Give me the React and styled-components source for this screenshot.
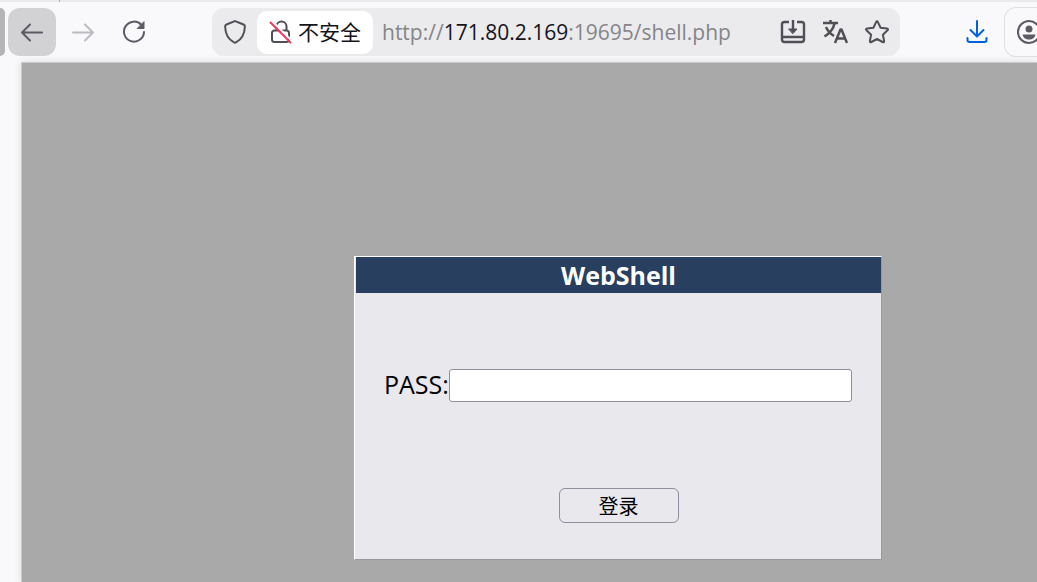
import React, { useState } from 'react';
import styled, { createGlobalStyle } from 'styled-components';

const GlobalStyle = createGlobalStyle`
  * {
    box-sizing: border-box;
  }
  body {
    margin: 0;
    background: #f9f9fb;
    font-family: 'Open Sans', 'Noto Sans CJK SC', sans-serif;
    overflow: hidden;
  }
`;

const Window = styled.div`
  display: flex;
  flex-direction: column;
  height: 100vh;
`;

const TabStrip = styled.div`
  flex: none;
  height: 2px;
  padding-left: 59px;
  background: #eaeaed;
`;

const TabEdge = styled.div`
  width: 1px;
  height: 2px;
  background: #aeaeb2;
`;

const Toolbar = styled.nav`
  flex: none;
  display: flex;
  align-items: center;
  gap: 3px;
  height: 60px;
  overflow: hidden;
`;

const SidebarEdge = styled.div`
  flex: none;
  width: 5px;
  height: 48px;
  border-radius: 0 8px 8px 0;
  background: #b5b5b7;
`;

const Button = styled.button`
  flex: none;
  padding: 0;
  border: none;
  background: none;
  font-family: inherit;
  color: inherit;
  cursor: pointer;
`;

const ToolButton = styled(Button)`
  display: grid;
  place-items: center;
  width: 48px;
  height: 48px;
  border-radius: 12px;
  color: ${(props) => props.$color || '#5b5b66'};
  background: ${(props) => (props.$active ? '#d2d2d4' : 'transparent')};
`;

const UrlBar = styled.div`
  flex: 1;
  min-width: 0;
  display: flex;
  align-items: center;
  height: 48px;
  margin: 0 50px 0 51px;
  padding: 0 2px;
  border-radius: 12px;
  background: #ebebed;
  color: #4f4f57;
`;

const UrlButton = styled(Button)`
  display: grid;
  place-items: center;
  width: 42px;
  height: 42px;
`;

const SecurityChip = styled(Button)`
  display: flex;
  align-items: center;
  gap: 4px;
  height: 43px;
  margin-left: 1px;
  padding: 0 12px 0 11px;
  border-radius: 10px;
  background: #fff;
  font-size: 21px;
  line-height: 28px;
`;

const Address = styled.div`
  flex: 1;
  min-width: 0;
  padding-left: 9px;
  overflow: hidden;
  white-space: nowrap;
  font-size: 21px;
  line-height: 30px;
  color: #858588;
`;

const Dark = styled.span`
  color: #15141a;
`;

const AccountButton = styled(Button)`
  width: 33px;
  height: 50px;
  padding-left: 11px;
  border: 1px solid #e0e0e4;
  border-right: none;
  border-radius: 12px 0 0 12px;
  overflow: hidden;
  color: #5b5b66;
`;

const Page = styled.main`
  flex: 1;
  display: grid;
  grid-template-columns: 332fr 528px 155fr;
  align-items: start;
  margin-left: 21px;
  padding-top: 193px;
  border-top: 1px solid #c9cacc;
  border-left: 1px solid #c9cacc;
  background: #a9a9a9;
  box-shadow: 0 0 8px rgba(0, 0, 0, 0.12);
`;

const LoginForm = styled.form`
  grid-column: 2;
  display: flex;
  flex-direction: column;
  padding-left: 1px;
  border: 1px solid #98989c;
  border-top-color: #fff;
  border-left-color: #fff;
  background: #e9e8ed;
  color: #000;
`;

const Title = styled.h1`
  margin: 0;
  background: #293f5f;
  color: #fff;
  font-size: 25px;
  font-weight: bold;
  line-height: 36px;
  text-align: center;
`;

const Field = styled.div`
  display: flex;
  align-items: flex-start;
  margin: 76px 29px 86px 28px;
`;

const Label = styled.label`
  font-size: 25px;
  line-height: 31px;
`;

const PassInput = styled.input`
  flex: 1;
  min-width: 0;
  height: 33px;
  padding: 0 6px;
  border: 1px solid #8f8f9d;
  border-radius: 3px;
  background: #fff;
  font-family: inherit;
  font-size: 20px;
  outline: none;
`;

const LoginButton = styled(Button)`
  align-self: center;
  width: 120px;
  height: 35px;
  margin-bottom: 36px;
  padding-top: 2px;
  border: 1px solid #8f8f9d;
  border-radius: 6px;
  font-size: 20px;
  line-height: 30px;
`;

const Icon = ({ children }) => (
  <svg
    width="26"
    height="26"
    viewBox="0 0 26 26"
    fill="none"
    stroke="currentColor"
    strokeWidth="2"
    strokeLinecap="round"
    strokeLinejoin="round"
    aria-hidden="true"
    display="block"
  >
    {children}
  </svg>
);

const App = () => {
  const [pass, setPass] = useState('');

  return (
    <Window>
      <GlobalStyle />
      <TabStrip>
        <TabEdge />
      </TabStrip>
      <Toolbar>
        <SidebarEdge />
        <ToolButton $active aria-label="Back">
          <Icon>
            <path d="M23 13.5H3M11 5.500l-8 8 8 8" />
          </Icon>
        </ToolButton>
        <ToolButton $color="#bbbbc1" aria-label="Forward">
          <Icon>
            <path d="M3 13.5h20M15 5.500l8 8-8 8" />
          </Icon>
        </ToolButton>
        <ToolButton aria-label="Reload">
          <Icon>
            <path d="M20.5 6A10 10 0 1 0 23 13" />
            <path d="M23 3v6.5h-6.500z" fill="currentColor" strokeWidth="1" />
          </Icon>
        </ToolButton>
        <UrlBar>
          <UrlButton aria-label="Tracking protection">
            <Icon>
              <path d="M12.200 2.300q.8-.4 1.600 0l7.700 3.200c1 .4 1.500 1 1.400 2-.3 7.500-3.300 13-8.900 15.900q-1 .5-2 0C6.400 20.500 3.400 15 3.100 7.500c0-1 .4-1.600 1.400-2z" />
            </Icon>
          </UrlButton>
          <SecurityChip>
            <Icon>
              <path d="M8.500 11V7.500a5 5 0 0 1 10 0V11M6.500 11.500h12c1.700 0 2.500.8 2.500 2.500v6.500c0 1.700-.8 2.500-2.500 2.500h-12C4.800 23 4 22.200 4 20.500V14c0-1.700.8-2.500 2.500-2.500z" />
              <path d="M3.500 1.500l20 20" stroke="#fff" strokeWidth="2" />
              <path d="M2.500 3.500l20 20" stroke="#f2395f" />
            </Icon>
            <Dark>不安全</Dark>
          </SecurityChip>
          <Address>
            http://<Dark>171.80.2.169</Dark>:19695/shell.php
          </Address>
          <UrlButton aria-label="Install">
            <Icon>
              <path
                d="M9 3H4.500Q2 3 2 5.500v15Q2 23 4.500 23h17q2.500 0 2.500-2.500v-15Q24 3 21.500 3H17M2 18h22M13 1v10"
                strokeWidth="2.400"
                strokeLinecap="butt"
              />
              <path d="M9 10h8l-4 4.500z" fill="currentColor" strokeWidth="1" />
            </Icon>
          </UrlButton>
          <UrlButton aria-label="Translate">
            <Icon>
              <path
                d="M1 4h15M8.500 1v3M12.500 4.500C11.500 9.500 8 14 2.500 17.500M4 8c1.500 3.500 4 6.500 8 9M13 24L18.500 10.500h1L25 24M15 19.500h8"
                strokeWidth="2.500"
                strokeLinecap="butt"
              />
            </Icon>
          </UrlButton>
          <UrlButton aria-label="Bookmark">
            <Icon>
              <path d="M12.100 3.100q.9-1.600 1.800 0l2.700 5.600 6.300.9q1.900.4.6 1.700l-4.600 4.400 1.200 6.200q.2 1.900-1.500 1.100L13 20l-5.600 3q-1.700.8-1.500-1.100l1.200-6.200-4.600-4.400q-1.300-1.300.6-1.700l6.300-.9z" />
            </Icon>
          </UrlButton>
        </UrlBar>
        <ToolButton $color="#0061e0" aria-label="Downloads">
          <Icon>
            <path d="M13 2v15M6.500 11l6.500 6.500 6.500-6.500M3.500 19v2q0 2 2 2h15q2 0 2-2v-2" />
          </Icon>
        </ToolButton>
        <AccountButton aria-label="Account">
          <Icon>
            <circle cx="13" cy="13" r="11" />
            <circle cx="13" cy="10" r="3.500" fill="currentColor" stroke="none" />
            <path d="M6.500 15.500h13c-.5 3-3 5-6.500 5s-6-2-6.500-5z" fill="currentColor" stroke="none" />
          </Icon>
        </AccountButton>
      </Toolbar>
      <Page>
        <LoginForm onSubmit={(e) => e.preventDefault()}>
          <Title>WebShell</Title>
          <Field>
            <Label htmlFor="pass">PASS:</Label>
            <PassInput
              id="pass"
              type="password"
              value={pass}
              onChange={(e) => setPass(e.target.value)}
            />
          </Field>
          <LoginButton type="submit">登录</LoginButton>
        </LoginForm>
      </Page>
    </Window>
  );
};

export default App;
